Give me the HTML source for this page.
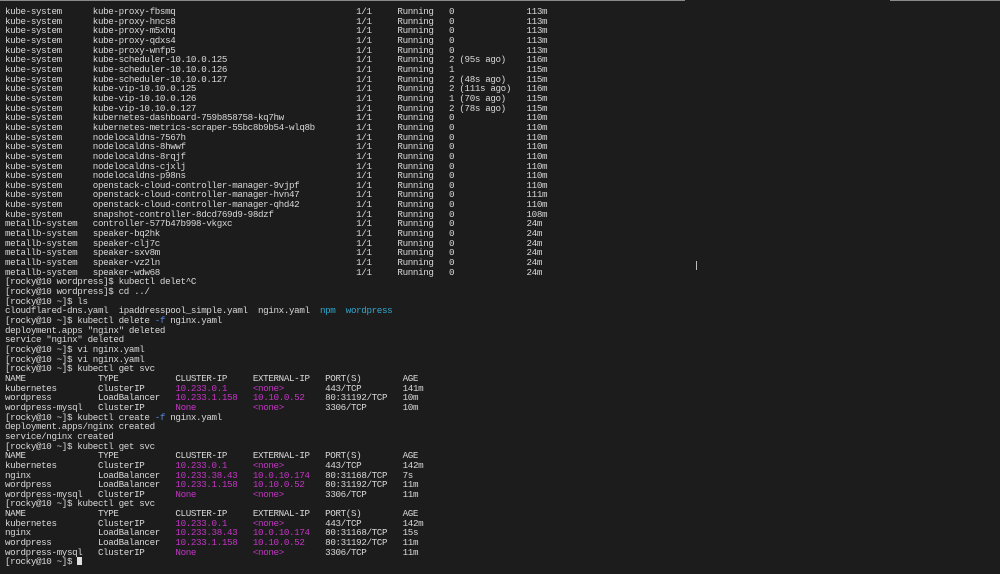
<!DOCTYPE html>
<html><head><meta charset="utf-8"><style>
html,body{margin:0;padding:0;background:#1c1c1c;width:1000px;height:574px;overflow:hidden}
.top{position:absolute;top:0;left:0;width:1000px;height:1px;background:#8a8a8a}
.gap{position:absolute;top:0;left:685px;width:205px;height:2px;background:#1c1c1c}
pre{position:absolute;left:5px;top:7px;margin:0;font-family:"Liberation Mono",monospace;font-size:9.2px;letter-spacing:-0.35px;line-height:9.66px;color:#d8d8d8;white-space:pre}
.m{color:#c435c4}.c{color:#2fa8cf}.b{color:#5a8ee0}
.cur{display:inline-block;width:5px;height:8px;background:#e0e0e0;vertical-align:-1px}
.ib{position:absolute;left:696px;top:261px;width:1px;height:9px;background:#bbb}
</style></head><body><div class="top"></div><div class="gap"></div><div class="ib"></div>
<pre>kube-system      kube-proxy-fbsmq                                   1/1     Running   0              113m
kube-system      kube-proxy-hncs8                                   1/1     Running   0              113m
kube-system      kube-proxy-m5xhq                                   1/1     Running   0              113m
kube-system      kube-proxy-qdxs4                                   1/1     Running   0              113m
kube-system      kube-proxy-wnfp5                                   1/1     Running   0              113m
kube-system      kube-scheduler-10.10.0.125                         1/1     Running   2 (95s ago)    116m
kube-system      kube-scheduler-10.10.0.126                         1/1     Running   1              115m
kube-system      kube-scheduler-10.10.0.127                         1/1     Running   2 (48s ago)    115m
kube-system      kube-vip-10.10.0.125                               1/1     Running   2 (111s ago)   116m
kube-system      kube-vip-10.10.0.126                               1/1     Running   1 (70s ago)    115m
kube-system      kube-vip-10.10.0.127                               1/1     Running   2 (78s ago)    115m
kube-system      kubernetes-dashboard-759b858758-kq7hw              1/1     Running   0              110m
kube-system      kubernetes-metrics-scraper-55bc8b9b54-wlq8b        1/1     Running   0              110m
kube-system      nodelocaldns-7567h                                 1/1     Running   0              110m
kube-system      nodelocaldns-8hwwf                                 1/1     Running   0              110m
kube-system      nodelocaldns-8rqjf                                 1/1     Running   0              110m
kube-system      nodelocaldns-cjxlj                                 1/1     Running   0              110m
kube-system      nodelocaldns-p98ns                                 1/1     Running   0              110m
kube-system      openstack-cloud-controller-manager-9vjpf           1/1     Running   0              110m
kube-system      openstack-cloud-controller-manager-hvn47           1/1     Running   0              111m
kube-system      openstack-cloud-controller-manager-qhd42           1/1     Running   0              110m
kube-system      snapshot-controller-8dcd769d9-98dzf                1/1     Running   0              108m
metallb-system   controller-577b47b998-vkgxc                        1/1     Running   0              24m
metallb-system   speaker-bq2hk                                      1/1     Running   0              24m
metallb-system   speaker-clj7c                                      1/1     Running   0              24m
metallb-system   speaker-sxv8m                                      1/1     Running   0              24m
metallb-system   speaker-vz2ln                                      1/1     Running   0              24m
metallb-system   speaker-wdw68                                      1/1     Running   0              24m
[rocky@10 wordpress]$ kubectl delet^C
[rocky@10 wordpress]$ cd ../
[rocky@10 ~]$ ls
cloudflared-dns.yaml  ipaddresspool_simple.yaml  nginx.yaml  <span class="c">npm</span>  <span class="c">wordpress</span>
[rocky@10 ~]$ kubectl delete <span class="b">-f</span> nginx.yaml
deployment.apps "nginx" deleted
service "nginx" deleted
[rocky@10 ~]$ vi nginx.yaml
[rocky@10 ~]$ vi nginx.yaml
[rocky@10 ~]$ kubectl get svc
NAME              TYPE           CLUSTER-IP     EXTERNAL-IP   PORT(S)        AGE
kubernetes        ClusterIP      <span class="m">10.233.0.1</span>     <span class="m">&lt;none&gt;</span>        443/TCP        141m
wordpress         LoadBalancer   <span class="m">10.233.1.158</span>   <span class="m">10.10.0.52</span>    80:31192/TCP   10m
wordpress-mysql   ClusterIP      <span class="m">None</span>           <span class="m">&lt;none&gt;</span>        3306/TCP       10m
[rocky@10 ~]$ kubectl create <span class="b">-f</span> nginx.yaml
deployment.apps/nginx created
service/nginx created
[rocky@10 ~]$ kubectl get svc
NAME              TYPE           CLUSTER-IP     EXTERNAL-IP   PORT(S)        AGE
kubernetes        ClusterIP      <span class="m">10.233.0.1</span>     <span class="m">&lt;none&gt;</span>        443/TCP        142m
nginx             LoadBalancer   <span class="m">10.233.38.43</span>   <span class="m">10.0.10.174</span>   80:31168/TCP   7s
wordpress         LoadBalancer   <span class="m">10.233.1.158</span>   <span class="m">10.10.0.52</span>    80:31192/TCP   11m
wordpress-mysql   ClusterIP      <span class="m">None</span>           <span class="m">&lt;none&gt;</span>        3306/TCP       11m
[rocky@10 ~]$ kubectl get svc
NAME              TYPE           CLUSTER-IP     EXTERNAL-IP   PORT(S)        AGE
kubernetes        ClusterIP      <span class="m">10.233.0.1</span>     <span class="m">&lt;none&gt;</span>        443/TCP        142m
nginx             LoadBalancer   <span class="m">10.233.38.43</span>   <span class="m">10.0.10.174</span>   80:31168/TCP   15s
wordpress         LoadBalancer   <span class="m">10.233.1.158</span>   <span class="m">10.10.0.52</span>    80:31192/TCP   11m
wordpress-mysql   ClusterIP      <span class="m">None</span>           <span class="m">&lt;none&gt;</span>        3306/TCP       11m
[rocky@10 ~]$ <span class="cur"></span></pre>
</body></html>
